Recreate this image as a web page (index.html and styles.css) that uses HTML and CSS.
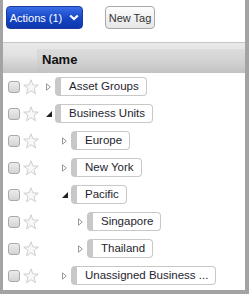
FILE: index.html
```html
<!DOCTYPE html>
<html lang="en">
<head>
<meta charset="UTF-8" />
<title>Tags</title>
<link rel="stylesheet" href="styles.css">
</head>
<body>
  <div class="frame">
    <div class="toolbar">
      <button class="btn-actions">Actions (1)
        <svg class="chev" width="10" height="7" viewBox="0 0 10 7"><path d="M1.2 1.5 L5 5 L8.8 1.5" fill="none" stroke="#fff" stroke-width="2.2"/></svg>
      </button>
      <button class="btn-new">New Tag</button>
    </div>
    <div class="grid-head">
      <div class="head-sel"></div>
      <div class="head-name">Name</div>
    </div>
    <div class="rows">
      <div class="row lvl0"><span class="cb"></span><svg class="star" width="16" height="16" viewBox="0 0 16 16"><path d="M8 0.8 L9.9 5.9 L15.3 6.1 L11 9.4 L12.5 14.8 L8 11.7 L3.5 14.8 L5 9.4 L0.7 6.1 L6.1 5.9 Z"/></svg><span class="exp"><svg class="closed" width="5" height="8" viewBox="0 0 5 8"><path d="M0.5 0.8 L4.3 4 L0.5 7.2 Z"/></svg></span><span class="tag">Asset Groups</span></div>
      <div class="row lvl0"><span class="cb"></span><svg class="star" width="16" height="16" viewBox="0 0 16 16"><path d="M8 0.8 L9.9 5.9 L15.3 6.1 L11 9.4 L12.5 14.8 L8 11.7 L3.5 14.8 L5 9.4 L0.7 6.1 L6.1 5.9 Z"/></svg><span class="exp"><svg class="open" width="6" height="6" viewBox="0 0 6 6"><path d="M6 0 L6 6 L0 6 Z"/></svg></span><span class="tag">Business Units</span></div>
      <div class="row lvl1"><span class="cb"></span><svg class="star" width="16" height="16" viewBox="0 0 16 16"><path d="M8 0.8 L9.9 5.9 L15.3 6.1 L11 9.4 L12.5 14.8 L8 11.7 L3.5 14.8 L5 9.4 L0.7 6.1 L6.1 5.9 Z"/></svg><span class="exp"><svg class="closed" width="5" height="8" viewBox="0 0 5 8"><path d="M0.5 0.8 L4.3 4 L0.5 7.2 Z"/></svg></span><span class="tag">Europe</span></div>
      <div class="row lvl1"><span class="cb"></span><svg class="star" width="16" height="16" viewBox="0 0 16 16"><path d="M8 0.8 L9.9 5.9 L15.3 6.1 L11 9.4 L12.5 14.8 L8 11.7 L3.5 14.8 L5 9.4 L0.7 6.1 L6.1 5.9 Z"/></svg><span class="exp"><svg class="closed" width="5" height="8" viewBox="0 0 5 8"><path d="M0.5 0.8 L4.3 4 L0.5 7.2 Z"/></svg></span><span class="tag">New York</span></div>
      <div class="row lvl1"><span class="cb"></span><svg class="star" width="16" height="16" viewBox="0 0 16 16"><path d="M8 0.8 L9.9 5.9 L15.3 6.1 L11 9.4 L12.5 14.8 L8 11.7 L3.5 14.8 L5 9.4 L0.7 6.1 L6.1 5.9 Z"/></svg><span class="exp"><svg class="open" width="6" height="6" viewBox="0 0 6 6"><path d="M6 0 L6 6 L0 6 Z"/></svg></span><span class="tag">Pacific</span></div>
      <div class="row lvl2"><span class="cb"></span><svg class="star" width="16" height="16" viewBox="0 0 16 16"><path d="M8 0.8 L9.9 5.9 L15.3 6.1 L11 9.4 L12.5 14.8 L8 11.7 L3.5 14.8 L5 9.4 L0.7 6.1 L6.1 5.9 Z"/></svg><span class="exp"><svg class="closed" width="5" height="8" viewBox="0 0 5 8"><path d="M0.5 0.8 L4.3 4 L0.5 7.2 Z"/></svg></span><span class="tag">Singapore</span></div>
      <div class="row lvl2"><span class="cb"></span><svg class="star" width="16" height="16" viewBox="0 0 16 16"><path d="M8 0.8 L9.9 5.9 L15.3 6.1 L11 9.4 L12.5 14.8 L8 11.7 L3.5 14.8 L5 9.4 L0.7 6.1 L6.1 5.9 Z"/></svg><span class="exp"><svg class="closed" width="5" height="8" viewBox="0 0 5 8"><path d="M0.5 0.8 L4.3 4 L0.5 7.2 Z"/></svg></span><span class="tag">Thailand</span></div>
      <div class="row lvl1"><span class="cb"></span><svg class="star" width="16" height="16" viewBox="0 0 16 16"><path d="M8 0.8 L9.9 5.9 L15.3 6.1 L11 9.4 L12.5 14.8 L8 11.7 L3.5 14.8 L5 9.4 L0.7 6.1 L6.1 5.9 Z"/></svg><span class="exp"><svg class="closed" width="5" height="8" viewBox="0 0 5 8"><path d="M0.5 0.8 L4.3 4 L0.5 7.2 Z"/></svg></span><span class="tag">Unassigned Business ...</span></div>
    </div>
  </div>
</body>
</html>
```

FILE: styles.css
```css
* {
  box-sizing: border-box;
}
body {
  margin: 0;
  font-family: "Liberation Sans", Arial, sans-serif;
  background: #fff;
}
.frame {
  width: 249px;
  height: 294px;
  border-left: 3px solid #a3a3a3;
  border-right: 4px solid #a3a3a3;
  border-bottom: 4px solid #a3a3a3;
  overflow: hidden;
}
.toolbar {
  display: flex;
  align-items: center;
  height: 42px;
  padding: 6px 0 13px 3px;
  gap: 22px;
}
.toolbar button {
  font-family: inherit;
  font-size: 11px;
  height: 23px;
  border-radius: 4px;
  padding: 0;
  cursor: pointer;
}
.btn-actions {
  width: 77px;
  display: flex;
  align-items: center;
  justify-content: center;
  gap: 7px;
  color: #fff;
  border: 1px solid #1c3aa0;
  background: linear-gradient(#3a6ee6, #1545c4 55%, #0e37ad);
}
.btn-new {
  width: 50px;
  color: #333;
  border: 1px solid #a8a8a8;
  background: linear-gradient(#fdfdfd, #e6e6e6);
}
.grid-head {
  display: flex;
  height: 31px;
  border-top: 1px solid #c6c6c6;
  background: linear-gradient(#e8e8e8, #e2e2e2 40%, #d2d2d2 70%, #c4c4c4);
}
.head-sel {
  width: 34px;
}
.head-name {
  flex: 1;
  margin-top: 6px;
  padding: 3px 0 0 5px;
  font-size: 13px;
  font-weight: bold;
  color: #111;
  background: linear-gradient(#dcdcdc, #d2d2d2 50%, #c2c2c2);
}
.row {
  display: flex;
  align-items: center;
  height: 27px;
  padding-left: 5px;
}
.cb {
  width: 12px;
  height: 12px;
  border: 1px solid #a9a9a9;
  border-radius: 3px;
  background: linear-gradient(#ececec, #d4d4d4);
}
.star {
  margin-left: 3px;
  fill: #f8f8f8;
  stroke: #cfcfcf;
  stroke-width: 1;
  stroke-linejoin: round;
}
.exp {
  display: flex;
  align-items: center;
  width: 16px;
  height: 19px;
  padding-left: 7px;
}
.lvl1 .exp { width: 32px; padding-left: 23px; }
.lvl2 .exp { width: 48px; padding-left: 39px; }
.exp .closed {
  fill: #fff;
  stroke: #999;
  stroke-width: 1;
}
.exp .open {
  fill: #222;
}
.tag {
  height: 19px;
  line-height: 17px;
  padding: 0 7px 0 8px;
  font-size: 11.5px;
  color: #1e1e2e;
  border: 1px solid #c8c8c8;
  border-left: 6px solid #c8c8c8;
  border-radius: 4px;
  background: #fff;
  white-space: nowrap;
}
```
